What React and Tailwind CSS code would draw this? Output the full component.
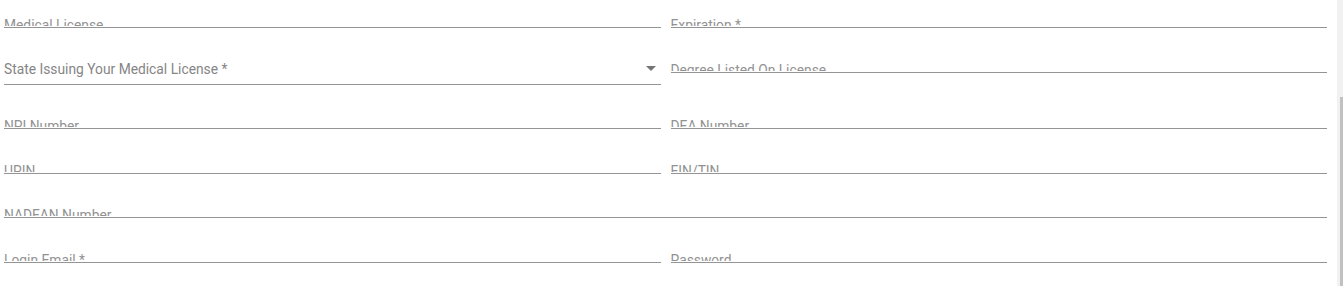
import React from "react";

function Field({ label, hClass, extra = "" }) {
  return (
    <div className={`${hClass} ${extra} border-b border-[#949494] flex flex-col justify-end`}>
      <div className="h-[7px] mb-[1px] overflow-hidden">
        <div className="mt-[-1px] text-[13.8px] leading-[14px] text-[#929292] whitespace-nowrap">{label}</div>
      </div>
    </div>
  );
}

function SelectField({ label }) {
  return (
    <div className="h-[57px] border-b border-[#949494] flex items-end justify-between pb-[7px]">
      <div className="text-[13.8px] leading-[16px] text-[#858585] whitespace-nowrap">{label}</div>
      <svg width="10" height="5" viewBox="0 0 10 5" className="mr-[5px] mb-[6px]">
        <path d="M0 0 L10 0 L5 5 Z" fill="#757575" />
      </svg>
    </div>
  );
}

export default function App() {
  return (
    <div className="w-[1343px] h-[286px] bg-white flex overflow-hidden" style={{ fontFamily: "Roboto, 'Liberation Sans', sans-serif" }}>
      <div className="flex-1 pl-[4px] pr-[10px]">
        <div className="grid grid-cols-2 gap-x-[10px] items-start">
          <Field label="Medical License" hClass="h-[28px]" />
          <Field label="Expiration *" hClass="h-[28px]" />
          <SelectField label="State Issuing Your Medical License *" />
          <Field label="Degree Listed On License" hClass="h-[45px]" />
        </div>
        <div className="grid grid-cols-2 gap-x-[10px] items-start">
          <Field label="NPI Number" hClass="h-[44px]" />
          <Field label="DEA Number" hClass="h-[44px]" />
          <Field label="UPIN" hClass="h-[45px]" />
          <Field label="EIN/TIN" hClass="h-[45px]" />
          <Field label="NADEAN Number" hClass="h-[44px]" extra="col-span-2" />
          <Field label="Login Email *" hClass="h-[45px]" />
          <Field label="Password" hClass="h-[45px]" />
        </div>
      </div>
      <div className="w-[6px] h-full bg-[#f1f1f1] flex flex-col">
        <div className="mt-[97px] ml-[3px] w-[3px] flex-1 bg-[#c1c1c1]" />
      </div>
    </div>
  );
}
